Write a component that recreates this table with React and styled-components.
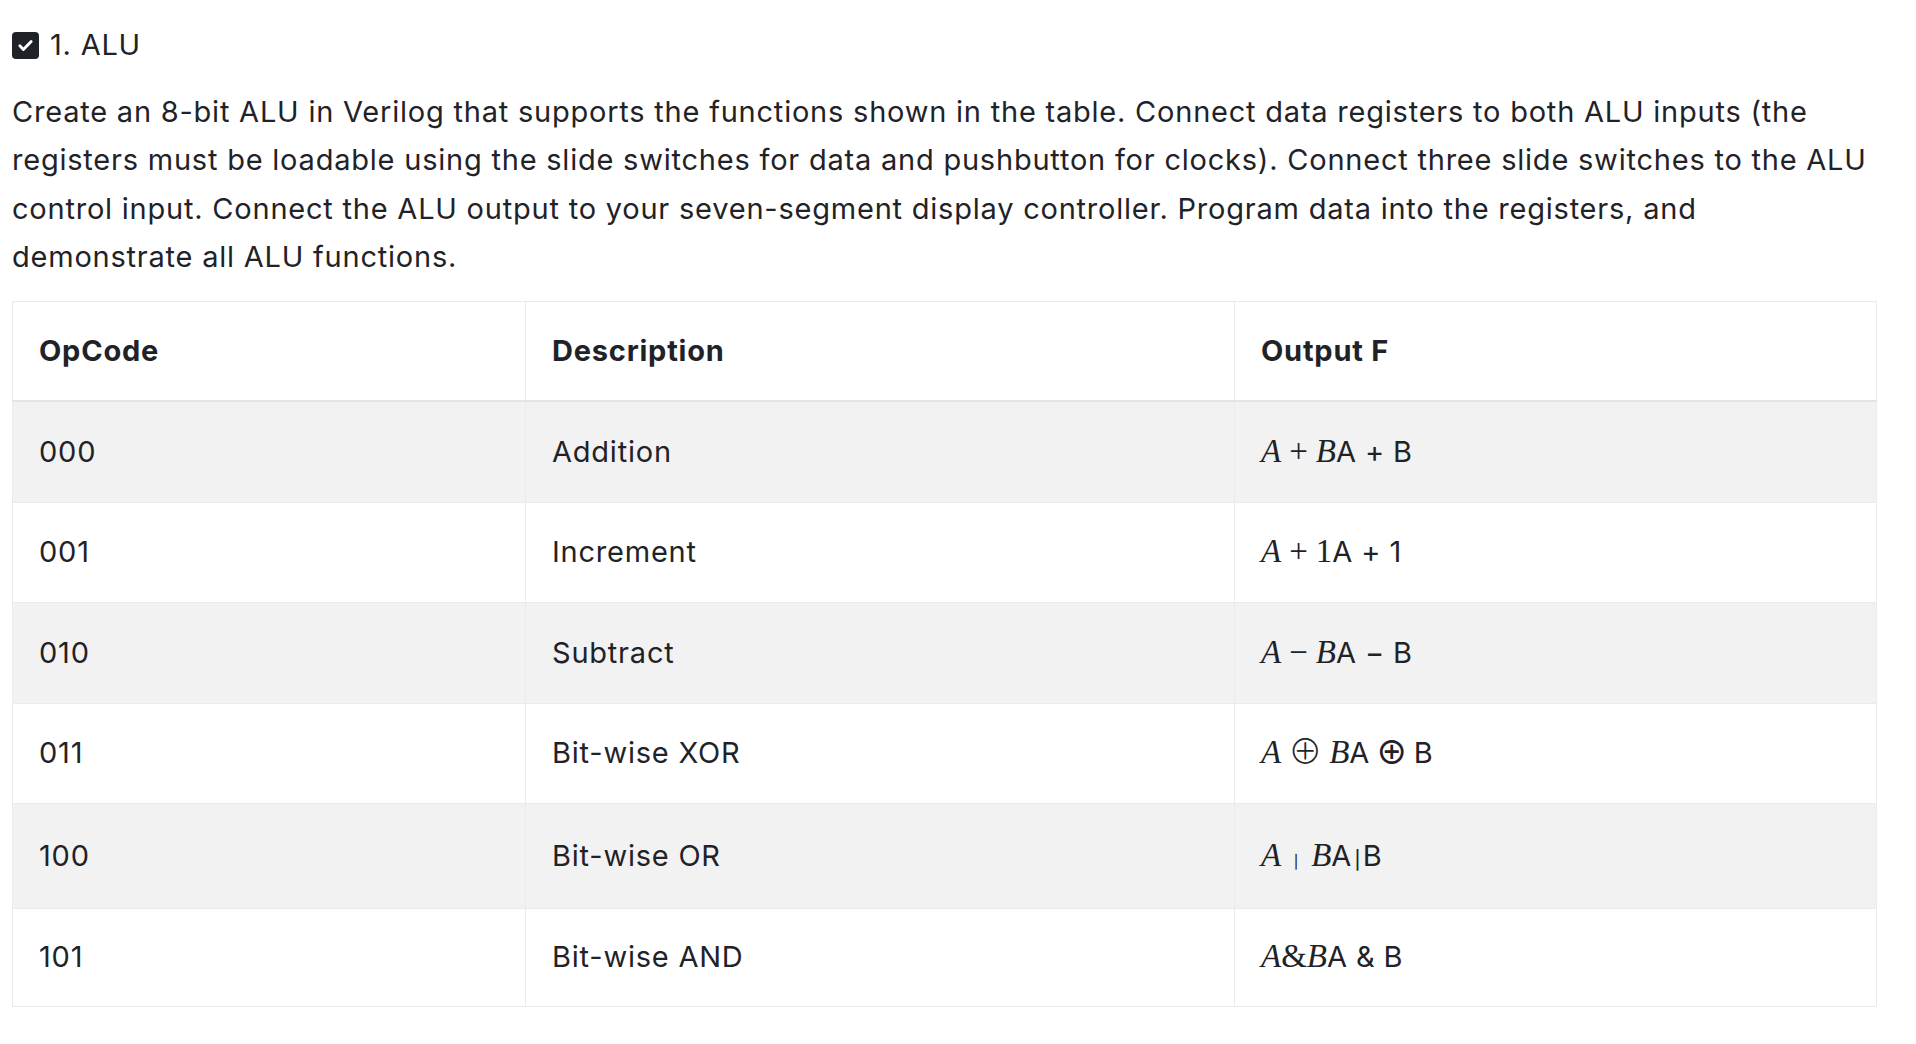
import React from 'react'
import styled, { createGlobalStyle } from 'styled-components'

const GlobalStyle = createGlobalStyle`
   body {
      margin: 0;
      background: #ffffff;
      color: #1f2328;
      font-family: Inter, 'Noto Sans', sans-serif;
      letter-spacing: 0.78px;
   }
`

// --- Styled Components ---

const Page = styled.div`
   width: 1864px;
   padding: 21px 0 40px 12px;
`

const Title = styled.h3`
   display: flex;
   align-items: center;
   gap: 11px;
   margin: 0 0 19px;
   font-size: 29px;
   font-weight: 400;
   line-height: 48px;
`

const CheckBox = styled.span`
   display: inline-flex;
   align-items: center;
   justify-content: center;
   width: 27px;
   height: 27px;
   border-radius: 4px;
   background: #1f2328;
`

const Paragraph = styled.p`
   margin: 0 0 20px;
   font-size: 29px;
   line-height: 48.3px;
`

const Table = styled.table`
   width: 100%;
   border-collapse: collapse;
   table-layout: fixed;
   font-size: 29px;
`

const HeadCell = styled.th`
   box-sizing: border-box;
   width: ${(p) => p.$width}px;
   padding: 25px 26px;
   text-align: left;
   font-weight: 700;
   line-height: 48px;
   border: 1px solid #ebebeb;
   border-bottom: 2px solid #e4e4e4;
`

const Cell = styled.td`
   box-sizing: border-box;
   padding: 0 26px;
   line-height: 48px;
   border: 1px solid #ebebeb;
   white-space: nowrap;
`

const Row = styled.tr`
   background: ${(p) => (p.$striped ? '#f2f2f2' : '#ffffff')};

   & > ${Cell} {
      height: ${(p) => p.$height ?? 100}px;
   }
`

const MathVar = styled.span`
   font-family: 'Liberation Serif', 'DejaVu Serif', serif;
   font-style: italic;
   font-size: 33px;
   line-height: 0;
   letter-spacing: 0;
`

const MathOp = styled.span`
   font-family: 'Liberation Serif', 'DejaVu Serif', serif;
   font-size: 33px;
   line-height: 0;
   letter-spacing: 0;
   margin: 0 ${(p) => p.$space ?? 8}px;
`

// circled plus: light and large in the math part, heavier in the plain text
const CircleOp = styled.span`
   font-family: 'Noto Sans CJK JP', 'DejaVu Sans', sans-serif;
   font-size: ${(p) => (p.$bold ? 32 : 34)}px;
   font-weight: ${(p) => (p.$bold ? 500 : 300)};
   line-height: 0;
   letter-spacing: 0;
   margin: 0 ${(p) => p.$space ?? 0}px;
   position: relative;
   top: 1px;
`

const Plain = styled.span`
   font-family: Inter, 'Noto Sans', sans-serif;
   letter-spacing: 0.4px;
`

const SmallBar = styled.span`
   font-family: 'DejaVu Sans', sans-serif;
   font-size: ${(p) => p.$size ?? 18}px;
   line-height: 0;
   letter-spacing: 0;
   margin: 0 ${(p) => p.$space ?? 0}px;
`

// --- data ---

const rows = [
   { code: '000', desc: 'Addition', op: '+', b: 'B', plain: 'A + B', height: 101 },
   { code: '001', desc: 'Increment', op: '+', b: '1', bUpright: true, plain: 'A + 1' },
   { code: '010', desc: 'Subtract', op: '−', b: 'B', plain: 'A − B', height: 101 },
   { code: '011', desc: 'Bit-wise XOR', op: 'xor', b: 'B' },
   { code: '100', desc: 'Bit-wise OR', op: 'bar', b: 'B', height: 105 },
   { code: '101', desc: 'Bit-wise AND', op: '&', b: 'B', plain: 'A & B', tight: true, height: 98 },
]

function MathPart({ row }) {
   let op
   if (row.op === 'bar') op = <SmallBar $size={16} $space={11}>∣</SmallBar>
   else if (row.op === 'xor') op = <CircleOp $space={7}>⊕</CircleOp>
   else op = <MathOp $space={row.tight ? 0 : 8}>{row.op}</MathOp>

   return (
      <>
         <MathVar>A</MathVar>
         {op}
         {row.bUpright ? <MathOp $space={0}>{row.b}</MathOp> : <MathVar>{row.b}</MathVar>}
      </>
   )
}

function PlainPart({ row }) {
   if (row.op === 'bar') {
      return (
         <Plain>
            A<SmallBar $size={22}>∣</SmallBar>B
         </Plain>
      )
   }
   if (row.op === 'xor') {
      return (
         <Plain>
            A<CircleOp $bold $space={6}>⊕</CircleOp>B
         </Plain>
      )
   }
   return <Plain>{row.plain}</Plain>
}

export default function App() {
   return (
      <Page>
         <GlobalStyle />
         <Title>
            <CheckBox>
               <svg width="17" height="17" viewBox="0 0 24 24" fill="none" stroke="#ffffff" strokeWidth="4" strokeLinecap="round" strokeLinejoin="round">
                  <path d="M4 12.5l5 5L20 6.5" />
               </svg>
            </CheckBox>
            1. ALU
         </Title>
         <Paragraph>
            Create an 8-bit ALU in Verilog that supports the functions shown in the table. Connect data registers to both ALU inputs (the
            registers must be loadable using the slide switches for data and pushbutton for clocks). Connect three slide switches to the ALU
            control input. Connect the ALU output to your seven-segment display controller. Program data into the registers, and
            demonstrate all ALU functions.
         </Paragraph>
         <Table>
            <thead>
               <tr>
                  <HeadCell $width={513}>OpCode</HeadCell>
                  <HeadCell $width={709}>Description</HeadCell>
                  <HeadCell $width={642}>Output F</HeadCell>
               </tr>
            </thead>
            <tbody>
               {rows.map((row, i) => (
                  <Row key={row.code} $striped={i % 2 === 0} $height={row.height}>
                     <Cell>{row.code}</Cell>
                     <Cell>{row.desc}</Cell>
                     <Cell>
                        <MathPart row={row} />
                        <PlainPart row={row} />
                     </Cell>
                  </Row>
               ))}
            </tbody>
         </Table>
      </Page>
   )
}
